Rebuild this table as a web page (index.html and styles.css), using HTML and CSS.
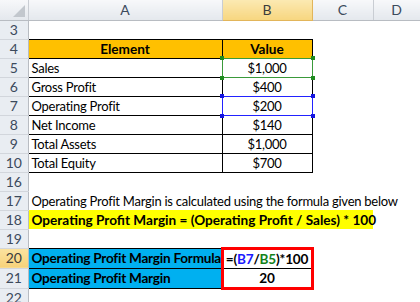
FILE: index.html
```html
<!DOCTYPE html>
<html>
<head>
<meta charset="utf-8">
<link rel="stylesheet" href="styles.css">
</head>
<body>
<table class="sheet">
  <colgroup>
    <col class="c-hdr"><col class="c-a"><col class="c-b"><col class="c-c"><col class="c-d">
  </colgroup>
  <tr class="colhead">
    <th class="corner"><span class="tri"></span></th>
    <th>A</th><th class="sel">B</th><th>C</th><th>D</th>
  </tr>
  <tr><th class="rh">3</th><td></td><td></td><td></td><td></td></tr>
  <tr><th class="rh">4</th><td class="tb hd">Element</td><td class="tb hd">Value</td><td></td><td></td></tr>
  <tr><th class="rh">5</th><td class="tb">Sales</td><td class="tb num ref green"><span class="box"></span><i class="h tl"></i><i class="h tr"></i><i class="h bl"></i><i class="h br"></i>$1,000</td><td></td><td></td></tr>
  <tr><th class="rh">6</th><td class="tb">Gross Profit</td><td class="tb num">$400</td><td></td><td></td></tr>
  <tr><th class="rh">7</th><td class="tb">Operating Profit</td><td class="tb num ref blue"><span class="box"></span><i class="h tl"></i><i class="h tr"></i><i class="h bl"></i><i class="h br"></i>$200</td><td></td><td></td></tr>
  <tr><th class="rh">8</th><td class="tb">Net Income</td><td class="tb num">$140</td><td></td><td></td></tr>
  <tr><th class="rh">9</th><td class="tb">Total Assets</td><td class="tb num">$1,000</td><td></td><td></td></tr>
  <tr><th class="rh">10</th><td class="tb">Total Equity</td><td class="tb num">$700</td><td></td><td></td></tr>
  <tr><th class="rh">16</th><td></td><td></td><td></td><td></td></tr>
  <tr><th class="rh">17</th><td colspan="4" class="note">Operating Profit Margin is calculated using the formula given below</td></tr>
  <tr><th class="rh">18</th><td colspan="3" class="yellow">Operating Profit Margin = (Operating Profit / Sales) * 100</td><td></td></tr>
  <tr><th class="rh">19</th><td></td><td></td><td></td><td></td></tr>
  <tr><th class="rh selrow">20</th><td class="tb blue-fill">Operating Profit Margin Formula</td><td class="tb num bold red-top">=(<span class="fb">B7</span>/<span class="fg">B5</span>)*100</td><td></td><td></td></tr>
  <tr><th class="rh">21</th><td class="tb blue-fill">Operating Profit Margin</td><td class="tb num bold red-bot">20</td><td></td><td></td></tr>
  <tr><th class="rh">22</th><td></td><td></td><td></td><td></td></tr>
</table>
</body>
</html>
```

FILE: styles.css
```css
html, body {
  margin: 0;
  padding: 0;
  background: #ffffff;
  overflow: hidden;
}
.sheet {
  border-collapse: collapse;
  table-layout: fixed;
  width: 420px;
  font-family: Lato, "Liberation Sans", sans-serif;
  font-size: 13px;
  letter-spacing: -0.25px;
  color: #000;
}
.c-hdr { width: 28px; }
.c-a { width: 194px; }
.c-b { width: 90px; }
.c-c { width: 61px; }
.c-d { width: 47px; }

.sheet td, .sheet th {
  padding: 0 3px;
  height: 19px;
  box-sizing: border-box;
  white-space: nowrap;
  line-height: 18px;
  vertical-align: middle;
}
.colhead th {
  height: 20px;
  background: linear-gradient(#f7f8fa, #e4e8ed);
  border-right: 1px solid #c9cdd3;
  border-bottom: 1px solid #b8bcc2;
  color: #3c4a5c;
  font-weight: normal;
  text-align: center;
  font-size: 14px;
  letter-spacing: 0;
}
.colhead th.sel {
  background: linear-gradient(#fbe9b2, #f7d680);
  color: #3c3c3c;
  border-right: 1px solid #e2b55a;
  border-bottom: 1px solid #e2b55a;
}
.corner {
  position: relative;
}
.tri {
  position: absolute;
  right: 3px;
  bottom: 3px;
  width: 0;
  height: 0;
  border-left: 12px solid transparent;
  border-bottom: 12px solid #c2c7cd;
}
.rh {
  background: #e9edf2;
  border-right: 1px solid #b8bcc2;
  border-bottom: 1px solid #d2d6dc;
  color: #3c4a5c;
  font-weight: normal;
  text-align: center;
  padding: 0 !important;
  font-size: 14px;
  letter-spacing: 0;
}
.rh.selrow {
  background: linear-gradient(#fbe3a0, #f7d27a);
  color: #3c3c3c;
}
.tb {
  border: 1px solid #000;
}
.hd, .bold, .yellow, .blue-fill {
  font-size: 13.6px;
  letter-spacing: 0;
  font-weight: bold;
}
.hd {
  background: #ffc000;
  text-align: center;
}
.num {
  text-align: center;
}
.note {
  overflow: visible;
}
.yellow {
  background: #ffff00;
}
.blue-fill {
  background: #00b0f0;
  overflow: hidden;
  letter-spacing: -0.25px;
}
.fb { color: #1a1aff; }
.fg { color: #13821a; }
.red-top, .red-bot {
  padding: 0 !important;
  letter-spacing: -0.2px;
}
.red-top {
  border-top: 3px solid #ff0000;
  border-left: 3px solid #ff0000;
  border-right: 3px solid #ff0000;
}
.red-bot {
  border-bottom: 3px solid #ff0000;
  border-left: 3px solid #ff0000;
  border-right: 3px solid #ff0000;
}
.ref {
  position: relative;
}
.ref .box {
  position: absolute;
  left: -1px;
  top: -1px;
  right: -1px;
  bottom: -1px;
  border: 1px solid;
}
.green .box { border-color: #3a9a3a; }
.blue .box { border-color: #2222ff; }
.h {
  position: absolute;
  width: 4px;
  height: 4px;
}
.green .h { background: #1e8a1e; }
.blue .h { background: #1515e0; }
.h.tl { left: -3px; top: -3px; }
.h.tr { right: -3px; top: -3px; }
.h.bl { left: -3px; bottom: -3px; }
.h.br { right: -3px; bottom: -3px; }
```
